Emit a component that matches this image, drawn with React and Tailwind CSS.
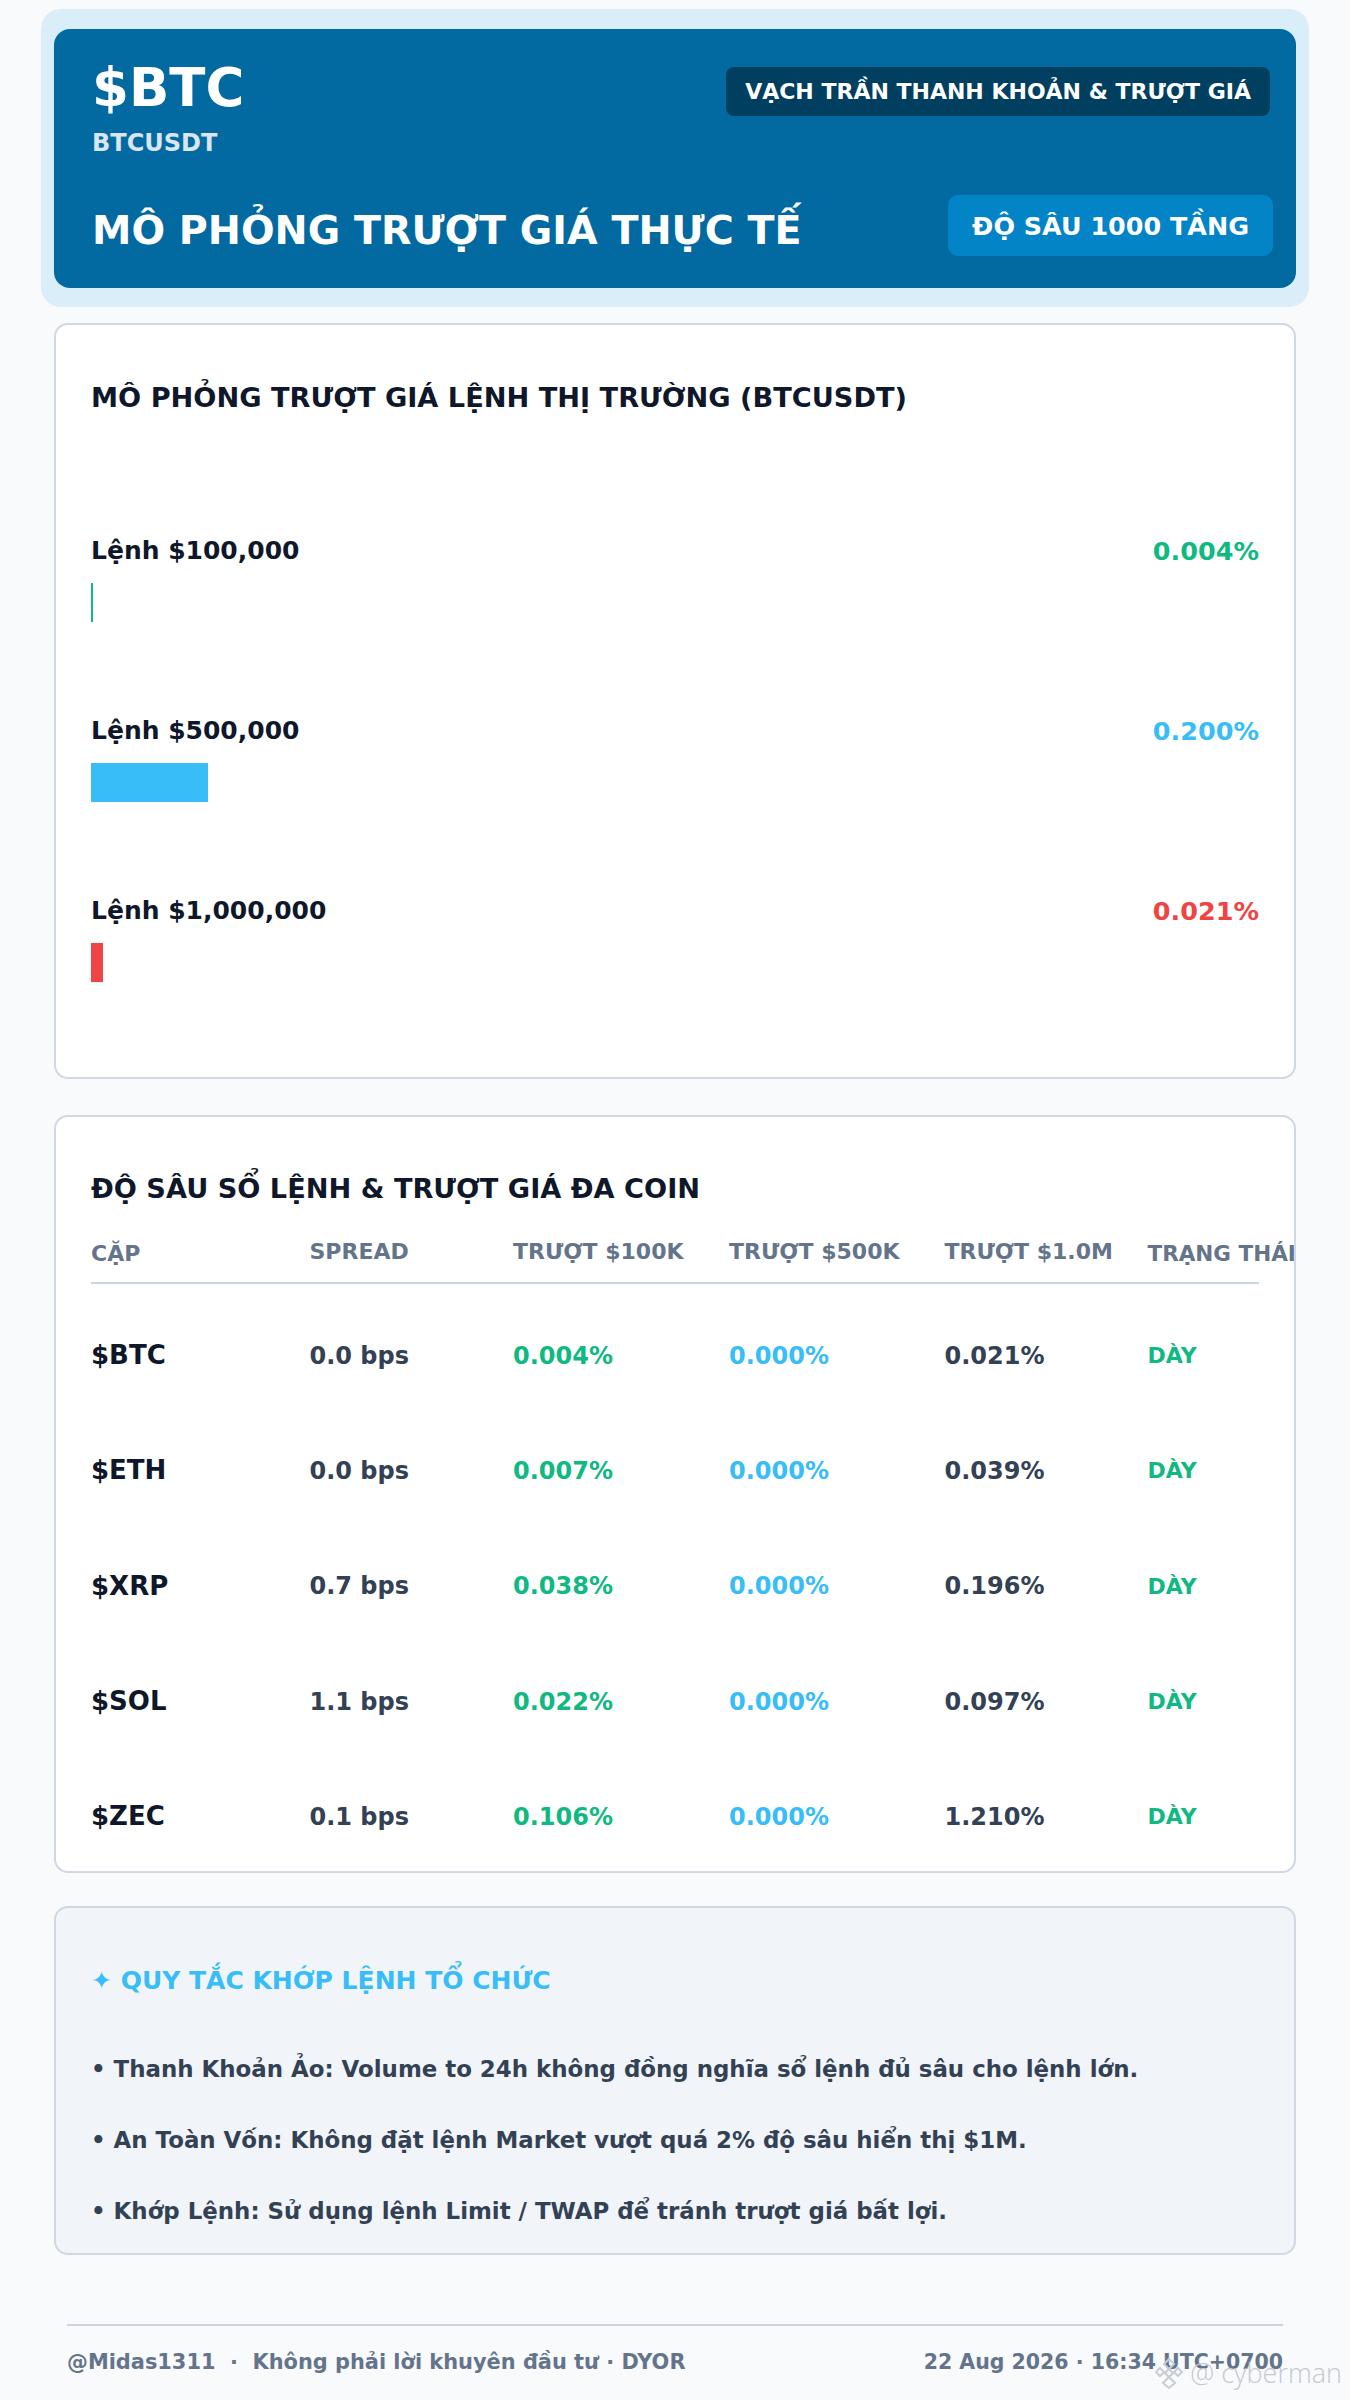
import React from "react";

const sims = [
  { label: "Lệnh $100,000", pct: 0.004, text: "text-[#10b981]", bar: "bg-[#10b981]" },
  { label: "Lệnh $500,000", pct: 0.2, text: "text-[#38bdf8]", bar: "bg-[#38bdf8]" },
  { label: "Lệnh $1,000,000", pct: 0.021, text: "text-[#ef4444]", bar: "bg-[#ef4444]" },
];

const coins = [
  ["$BTC", "0.0 bps", "0.004%", "0.000%", "0.021%"],
  ["$ETH", "0.0 bps", "0.007%", "0.000%", "0.039%"],
  ["$XRP", "0.7 bps", "0.038%", "0.000%", "0.196%"],
  ["$SOL", "1.1 bps", "0.022%", "0.000%", "0.097%"],
  ["$ZEC", "0.1 bps", "0.106%", "0.000%", "1.210%"],
];

const cols = "grid grid-cols-[218.5px_203.5px_216px_215.5px_203px_111.5px]";

function Watermark() {
  return (
    <div className="absolute right-[8px] bottom-[10px] flex items-center gap-[4px] text-[#c5c9cf]">
      <svg width="34" height="34" viewBox="0 0 34 34" fill="none" stroke="#c9cdd3" strokeWidth="2">
        <path d="M17 3 L22 8 L17 13 L12 8 Z" />
        <path d="M17 13 L21 17 L17 21 L13 17 Z" />
        <path d="M8 12 L12 16 L8 20 L4 16 Z" />
        <path d="M26 12 L30 16 L26 20 L22 16 Z" />
        <path d="M17 21 L23 27 L17 32 L11 27 Z" />
      </svg>
      <span className="font-['Open_Sans',sans-serif] text-[27px] font-light leading-[32px]">@ cyberman</span>
    </div>
  );
}

export default function App() {
  return (
    <div className="relative min-h-[2400px] overflow-hidden bg-[#f8fafc] font-['DejaVu_Sans',sans-serif] font-bold">
      <div className="px-[54px] pt-[9px]">
        {/* Header */}
        <header className="-mx-[13px] rounded-[20px] bg-[#daeef9] px-[13px] pt-[20px] pb-[19px]">
          <div className="rounded-[16px] bg-[#0369a1] pl-[38px] pr-[23px] pt-[29px] pb-[32px] text-white">
            <div className="flex items-start justify-between">
              <div>
                <div className="text-[53px] leading-[60px]">$BTC</div>
                <div className="mt-[11px] text-[24px] leading-[28px] text-[#d8e6f0]">BTCUSDT</div>
              </div>
              <div className="mt-[9px] mr-[3px] flex h-[49px] items-center rounded-[8px] bg-black/40 px-[19px] text-[22px] leading-[26px] whitespace-nowrap">
                VẠCH TRẦN THANH KHOẢN &amp; TRƯỢT GIÁ
              </div>
            </div>
            <div className="mt-[38px] flex items-start justify-between">
              <div className="mt-[11.5px] text-[39.6px] leading-[46px] whitespace-nowrap">MÔ PHỎNG TRƯỢT GIÁ THỰC TẾ</div>
              <div className="flex h-[61px] items-center rounded-[10px] bg-[#0284c7] px-[24px] text-[25.4px] leading-[30px] whitespace-nowrap">
                ĐỘ SÂU 1000 TẦNG
              </div>
            </div>
          </div>
        </header>

        {/* Slippage simulation */}
        <section className="mt-[16px] rounded-[14px] border-2 border-[#cfd8e3] bg-white px-[35px] pt-[57px] pb-[95px]">
          <h2 className="text-[27.2px] leading-[32px] text-[#0f172a]">MÔ PHỎNG TRƯỢT GIÁ LỆNH THỊ TRƯỜNG (BTCUSDT)</h2>
          {sims.map((s, i) => (
            <div key={s.label} className={i === 0 ? "mt-[122px]" : "mt-[94px]"}>
              <div className="flex items-start justify-between">
                <span className="text-[25px] leading-[30px] text-[#0f172a]">{s.label}</span>
                <span className={`text-[25.5px] leading-[30px] ${s.text}`}>{s.pct.toFixed(3)}%</span>
              </div>
              <div className="mt-[17px] h-[39px]">
                <div className={`h-full ${s.bar}`} style={{ width: `${s.pct * 50}%` }} />
              </div>
            </div>
          ))}
        </section>

        {/* Multi-coin table */}
        <section className="mt-[36px] overflow-hidden rounded-[14px] border-2 border-[#cfd8e3] bg-white px-[35px] pt-[56px]">
          <h2 className="text-[27.2px] leading-[32px] text-[#0f172a]">ĐỘ SÂU SỔ LỆNH &amp; TRƯỢT GIÁ ĐA COIN</h2>
          <div className={`${cols} mt-[34px] items-start border-b-2 border-[#cbd5e1] pb-[16px] text-[22px] leading-[25px] text-[#64748b] whitespace-nowrap`}>
            <div className="pt-[2px]">CẶP</div>
            <div>SPREAD</div>
            <div>TRƯỢT $100K</div>
            <div>TRƯỢT $500K</div>
            <div>TRƯỢT $1.0M</div>
            <div className="pt-[2px] text-[21.5px]">TRẠNG THÁI</div>
          </div>
          <div className="mt-[14px] -mb-[3px]">
            {coins.map((c) => (
              <div key={c[0]} className={`${cols} h-[115.3px] items-center whitespace-nowrap`}>
                <div className="text-[26px] text-[#0f172a]">{c[0]}</div>
                <div className="text-[24px] text-[#334155]">{c[1]}</div>
                <div className="text-[24px] text-[#10b981]">{c[2]}</div>
                <div className="text-[24px] text-[#38bdf8]">{c[3]}</div>
                <div className="text-[24px] text-[#334155]">{c[4]}</div>
                <div className="text-[22px] text-[#10b981]">DÀY</div>
              </div>
            ))}
          </div>
        </section>

        {/* Rules */}
        <section className="mt-[33px] rounded-[14px] border-2 border-[#cfd8e3] bg-[#f1f5f9] px-[35px] pt-[58px] pb-[28px]">
          <h2 className="text-[25px] leading-[30px] text-[#38bdf8]">✦ QUY TẮC KHỚP LỆNH TỔ CHỨC</h2>
          <ul className="mt-[59px] flex flex-col gap-[43px] text-[22.9px] leading-[28px] text-[#334155]">
            <li>• Thanh Khoản Ảo: Volume to 24h không đồng nghĩa sổ lệnh đủ sâu cho lệnh lớn.</li>
            <li>• An Toàn Vốn: Không đặt lệnh Market vượt quá 2% độ sâu hiển thị $1M.</li>
            <li>• Khớp Lệnh: Sử dụng lệnh Limit / TWAP để tránh trượt giá bất lợi.</li>
          </ul>
        </section>

        {/* Footer */}
        <footer className="mx-[13px] mt-[69px] flex items-baseline justify-between border-t-2 border-[#cbd5e1] pt-[24px] leading-[24px] text-[#64748b] whitespace-nowrap">
          <span className="text-[20.9px]">@Midas1311&nbsp;&nbsp;·&nbsp;&nbsp;Không phải lời khuyên đầu tư · DYOR</span>
          <span className="text-[20.5px]">22 Aug 2026 · 16:34 UTC+0700</span>
        </footer>
      </div>
      <Watermark />
    </div>
  );
}
